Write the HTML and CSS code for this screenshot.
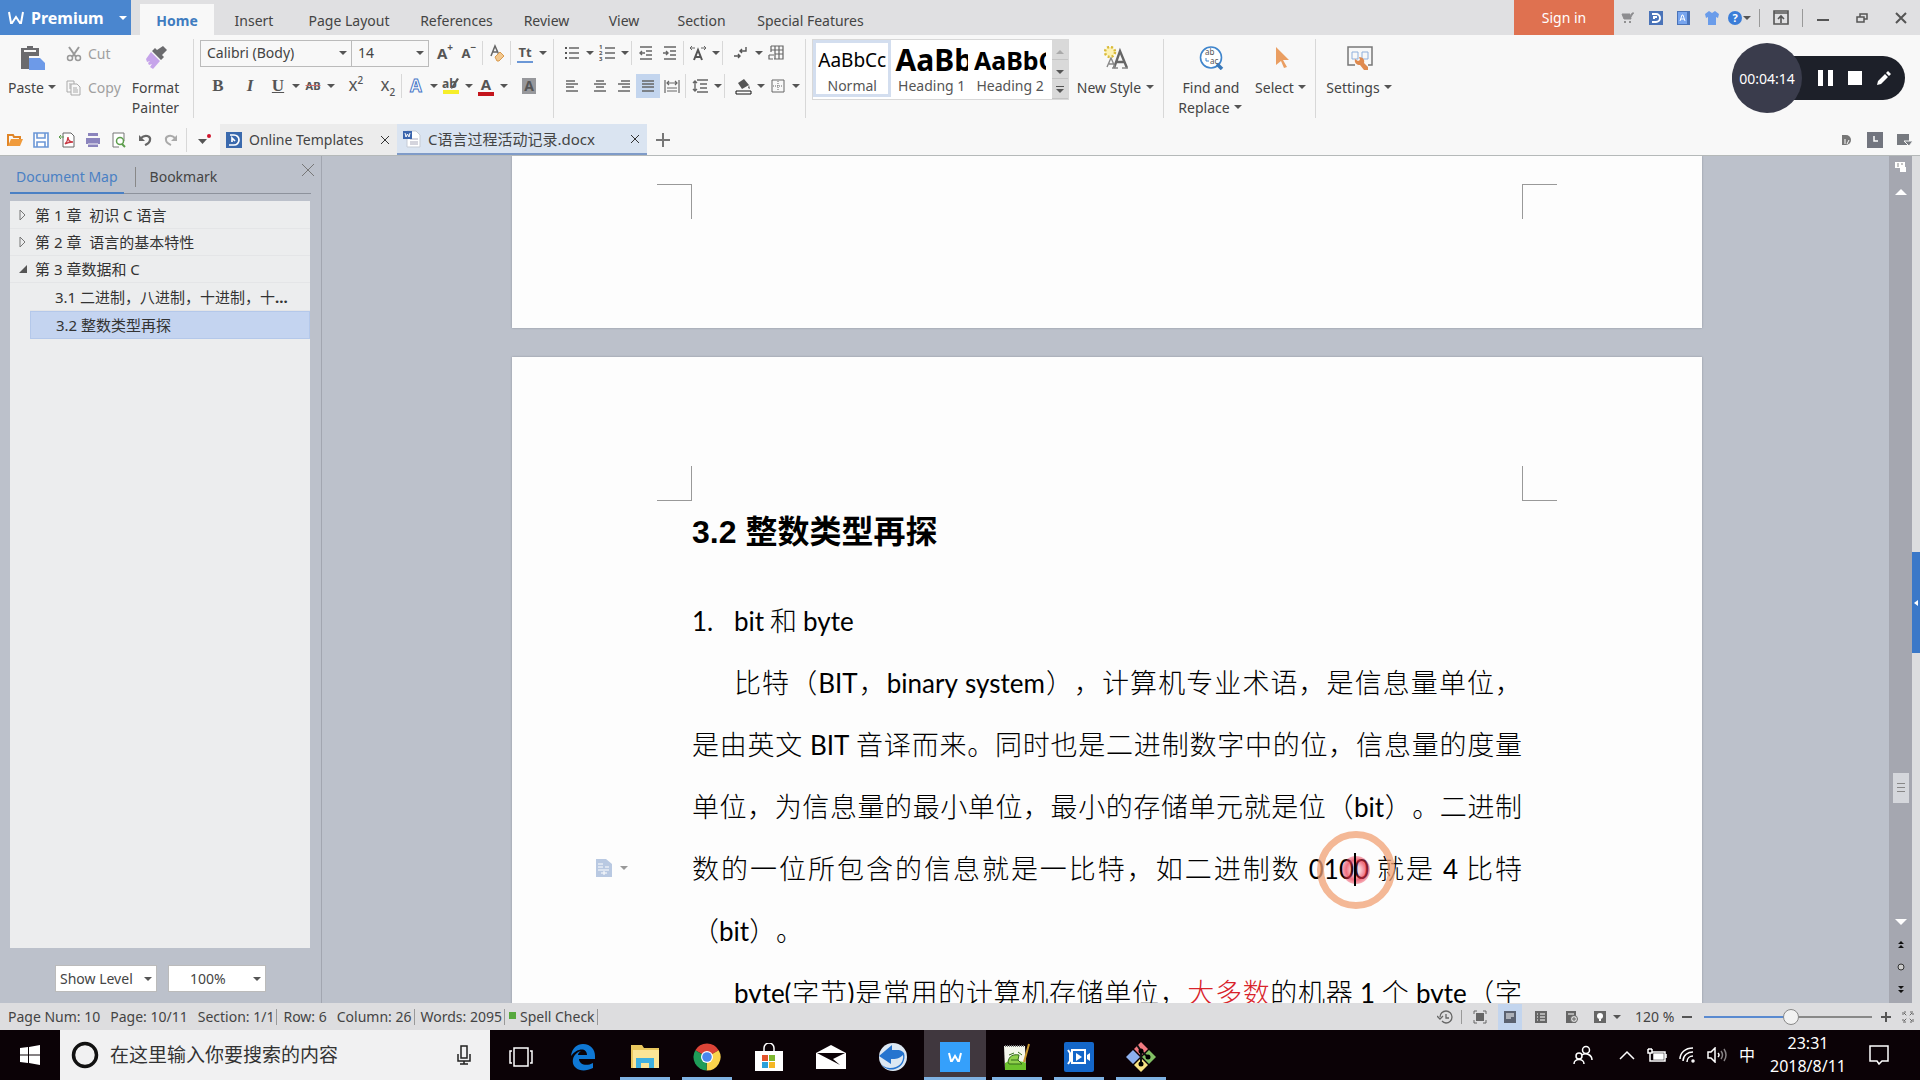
FILE: index.html
```html
<!DOCTYPE html>
<html lang="zh-CN">
<head>
    <meta charset="UTF-8">
    <title>C语言过程活动记录.docx</title>
    <link rel="stylesheet" href="styles.css">
</head>
<body>
<!--标题栏-->
<header class="titlebar">
    <button class="premium">
        <svg width="16" height="14" viewBox="0 0 16 14"><path d="M1 1l2 11h1l4-6 4 6h1l2-11" fill="none" stroke="#fff" stroke-width="2"/></svg>
        <b>Premium</b><i class="caret"></i>
    </button>
    <nav class="menu">
        <a href="#" class="on m-home">Home</a>
        <a href="#" class="m-insert">Insert</a>
        <a href="#" class="m-page">Page Layout</a>
        <a href="#" class="m-ref">References</a>
        <a href="#" class="m-review">Review</a>
        <a href="#" class="m-view">View</a>
        <a href="#" class="m-section">Section</a>
        <a href="#" class="m-special">Special Features</a>
    </nav>
    <button class="signin">Sign in</button>
    <div class="wintools">
        <button title="Shop"><svg width="14" height="14" viewBox="0 0 14 14"><path d="M1 3h8l1 5H3zM9 8l2-6h2" fill="#8d8d90" stroke="#8d8d90"/><circle cx="4" cy="11" r="1" fill="#777"/><circle cx="9" cy="11" r="1" fill="#777"/></svg></button>
        <button title="Docer"><svg width="14" height="14" viewBox="0 0 14 14"><path d="M0 0h14v14H0z" fill="#4a73b8"/><path d="M3 3h4a4 4 0 010 8H3M5 8V6h3" fill="none" stroke="#fff" stroke-width="2"/></svg></button>
        <button title="Library"><svg width="14" height="14" viewBox="0 0 14 14"><path d="M0 0h13v14H0z" fill="#4a73b8"/><path d="M1 1h9v12H1z" fill="#78a5ee"/><path d="M3 10l2-6h1l2 6M4 8h3" fill="none" stroke="#fff"/></svg></button>
        <button title="Skin"><svg width="14" height="14" viewBox="0 0 14 14"><path d="M4 0l3 2 3-2 4 3-1 4-2-1v8H3V6L1 7 0 3z" fill="#6a9cea"/></svg></button>
        <button title="Help" class="help"><svg width="14" height="14" viewBox="0 0 14 14"><circle cx="7" cy="7" r="7" fill="#3b7dd8"/><text x="7" y="11" text-anchor="middle" class="q">?</text></svg><i class="caret"></i></button>
        <i class="vline"></i>
        <button title="Ribbon" class="wide"><svg width="16" height="15" viewBox="0 0 16 15"><path d="M1 1h14v13H1zM1 3h14M8 13V6M5 9l3-3 3 3" fill="none" stroke="#555" stroke-width="1.6"/></svg></button>
        <i class="vline"></i>
        <button title="Minimize" class="win"><svg width="12" height="12" viewBox="0 0 12 12"><path d="M0 8h12" stroke="#555" stroke-width="2"/></svg></button>
        <button title="Restore" class="win"><svg width="12" height="12" viewBox="0 0 12 12"><path d="M1 5h7v5H1zM4 5V2h7v5H8" fill="none" stroke="#555" stroke-width="1.5"/></svg></button>
        <button title="Close" class="win"><svg width="12" height="12" viewBox="0 0 12 12"><path d="M1 1l10 10M11 1L1 11" stroke="#555" stroke-width="2"/></svg></button>
    </div>
</header>

<!--功能区-->
<section class="ribbon">
    <button class="big paste">
        <svg width="24" height="24" viewBox="0 0 24 24"><path d="M0 2h6V0h6v2h6v8H8v13H0z" fill="#6b6b6e"/><path d="M3 5h12" stroke="#f8f8f8" stroke-width="2"/><path d="M8 12h11l5 5v7H8z" fill="#6d9ae8"/></svg>
        <span>Paste<i class="caret"></i></span>
    </button>
    <div class="clip">
        <button><svg width="16" height="16" viewBox="0 0 16 16"><path d="M3 1l7 10M13 1L6 11" stroke="#999" stroke-width="2"/><circle cx="4" cy="12" r="2.5" fill="none" stroke="#999" stroke-width="1.5"/><circle cx="12" cy="12" r="2.5" fill="none" stroke="#999" stroke-width="1.5"/></svg>Cut</button>
        <button><svg width="16" height="16" viewBox="0 0 16 16"><path d="M5 12H1V1h7v3M5 4h6l3 3v8H5zM7 8h4M7 10h5M7 12h5M3 4h2M3 6h2M3 8h2" fill="none" stroke="#aaa"/></svg>Copy</button>
    </div>
    <button class="big painter">
        <svg width="24" height="24" viewBox="0 0 24 24"><path d="M19 0l4 4-5 5 2 2-3 3-9-9 3-3 2 2z" fill="#6b6b6e"/><path d="M7 6l9 9-7 8-3-2 2-3-3 1-1-2 2-2-3 1-1-3z" fill="#c6a4ea"/></svg>
        <span>Format<br>Painter</span>
    </button>
    <i class="sep"></i>

    <div class="group g-font">
        <div class="row">
            <label class="combo font"><select aria-label="Font"><option>Calibri (Body)</option></select><i class="caret"></i></label>
            <label class="combo size"><select aria-label="Font size"><option>14</option></select><i class="caret"></i></label>
            <button class="t gap">A<sup>+</sup></button>
            <button class="t small">A<sup>−</sup></button>
            <i class="bar"></i>
            <button class="t"><svg width="16" height="18" viewBox="0 0 16 18"><path d="M2 12L6 2l4 9M3 8h5" fill="none" stroke="#666" stroke-width="1.5"/><path d="M6 13l5-5 4 4-5 5H8z" fill="#f3c88e" stroke="#d89a4e"/></svg></button>
            <i class="bar"></i>
            <button class="t tt">Tt</button><i class="caret"></i>
        </div>
        <div class="row row2">
            <button class="t serif">B</button>
            <button class="t serif it gap2">I</button>
            <button class="t serif un gap">U</button><i class="caret"></i>
            <button class="t strike">AB</button><i class="caret"></i>
            <button class="t script gap2">X<sup>2</sup></button>
            <button class="t script gap2">X<sub>2</sub></button>
            <i class="bar"></i>
            <button class="t glow">A</button><i class="caret"></i>
            <button class="t"><svg width="18" height="18" viewBox="0 0 18 18"><path d="M1 13h16v4H1z" fill="#f6ee2a"/><text x="0" y="11" class="ab">ab</text><path d="M17 2l-6 9-2 1 1-3 5-8z" fill="#555"/></svg></button><i class="caret"></i>
            <button class="t redbar">A</button><i class="caret"></i>
            <button class="t gap2"><span class="shade">A</span></button>
        </div>
    </div>
    <i class="sep"></i>

    <div class="group g-para">
        <div class="row">
            <button class="t"><svg width="16" height="16" viewBox="0 0 16 16"><path d="M5 3h10M5 8h10M5 13h10" stroke="#666" stroke-width="1.4"/><path d="M1 3h2M1 8h2M1 13h2" stroke="#555" stroke-width="2"/></svg></button><i class="caret"></i>
            <button class="t"><svg width="16" height="18" viewBox="0 0 16 18"><path d="M6 4h10M6 9h10M6 14h10" stroke="#666" stroke-width="1.4"/><text x="0" y="5" class="n">1</text><text x="0" y="11" class="n">2</text><text x="0" y="17" class="n">3</text></svg></button><i class="caret"></i>
            <i class="bar"></i>
            <button class="t"><svg width="14" height="16" viewBox="0 0 14 16"><path d="M1 2h12M7 6h6M7 10h6M1 14h12M1 8h5M3 6L1 8l2 2" fill="none" stroke="#666" stroke-width="1.4"/></svg></button>
            <button class="t"><svg width="14" height="16" viewBox="0 0 14 16"><path d="M1 2h12M7 6h6M7 10h6M1 14h12M0 8h5M3 6l2 2-2 2" fill="none" stroke="#666" stroke-width="1.4"/></svg></button>
            <i class="bar"></i>
            <button class="t"><svg width="16" height="16" viewBox="0 0 16 16"><path d="M4 15l4-10 4 10M5 12h6" fill="none" stroke="#555" stroke-width="2"/><path d="M0 3h5M2 1L0 3l2 2M16 3h-5M14 1l2 2-2 2" fill="none" stroke="#666"/></svg></button><i class="caret"></i>
            <i class="bar"></i>
            <button class="t gap"><svg width="14" height="16" viewBox="0 0 14 16"><path d="M12 2v4H6M8 4L6 6l2 2M0 11h6M4 9l2 2-2 2" fill="none" stroke="#555" stroke-width="1.4"/></svg></button><i class="caret"></i>
            <button class="t"><svg width="16" height="16" viewBox="0 0 16 16"><path d="M3 1h12v13H6M3 1v6M3 5h12M7 1v13M11 1v13M7 9h8M1 10h5M1 10v4h4" fill="none" stroke="#666" stroke-width="1.2"/></svg></button>
        </div>
        <div class="row row2">
            <button class="t"><svg width="14" height="14" viewBox="0 0 14 14"><path d="M1 2h9M1 5h12M1 8h8M1 12h12" stroke="#666" stroke-width="1.4"/></svg></button>
            <button class="t gap"><svg width="14" height="14" viewBox="0 0 14 14"><path d="M3 2h8M1 5h12M3 8h8M1 12h12" stroke="#666" stroke-width="1.4"/></svg></button>
            <button class="t"><svg width="14" height="14" viewBox="0 0 14 14"><path d="M4 2h9M1 5h12M5 8h8M1 12h12" stroke="#666" stroke-width="1.4"/></svg></button>
            <button class="t picked"><svg width="14" height="14" viewBox="0 0 14 14"><path d="M1 2h12M1 5h12M1 8h12M1 12h12" stroke="#666" stroke-width="1.4"/></svg></button>
            <button class="t"><svg width="16" height="14" viewBox="0 0 16 14"><path d="M1 1v13M15 1v13M3 4h10M5 2L3 4l2 2M11 2l2 2-2 2M3 9h10M3 12h10" fill="none" stroke="#666" stroke-width="1.2"/></svg></button>
            <i class="bar"></i>
            <button class="t"><svg width="16" height="16" viewBox="0 0 16 16"><path d="M5 2h11M8 6h7M8 10h7M5 14h11M3 3v10M1 5l2-2 2 2M1 11l2 2 2-2" fill="none" stroke="#666" stroke-width="1.4"/></svg></button><i class="caret"></i>
            <i class="bar"></i>
            <button class="t gap"><svg width="18" height="18" viewBox="0 0 18 18"><path d="M4 6l6-4 5 6-7 4zM15 8l1 4-2-1z" fill="#555"/><path d="M2 14h15v3H2z" fill="#fff" stroke="#111"/></svg></button><i class="caret"></i>
            <button class="t"><svg width="14" height="14" viewBox="0 0 14 14"><path d="M1 1h12v12H1z" fill="none" stroke="#666"/><path d="M7 2v10M2 7h10" stroke="#666" stroke-dasharray="1 1"/></svg></button><i class="caret"></i>
        </div>
    </div>
    <i class="sep"></i>

    <div class="gallery">
        <button class="style chosen"><span class="s0">AaBbCc</span><small>Normal</small></button>
        <button class="style"><b class="s1">AaBb</b><small>Heading 1</small></button>
        <button class="style"><b class="s2">AaBbC</b><small>Heading 2</small></button>
        <div class="scroller">
            <button title="Up"><i class="caret up"></i></button>
            <button title="Down"><i class="caret"></i></button>
            <button title="More"><i class="caret more"></i></button>
        </div>
    </div>
    <button class="big newstyle">
        <svg width="24" height="24" viewBox="0 0 24 24"><path d="M10 22l6-17 7 17M12 16h8" fill="none" stroke="#666" stroke-width="2.4"/><path d="M3 21l4-9 4 9M5 18h5M8 22h6M18 22h6" fill="none" stroke="#888" stroke-width="1.4"/><circle cx="6" cy="6" r="5" fill="#fdf2b5" stroke="#d9bb3a" stroke-width="2.5" stroke-dasharray="2 2"/></svg>
        <span>New Style<i class="caret"></i></span>
    </button>
    <i class="sep"></i>
    <button class="big find">
        <svg width="26" height="24" viewBox="0 0 26 24"><circle cx="13" cy="11.500" r="10.500" fill="#fff" stroke="#3f85cc" stroke-width="1.6"/><path d="M19 18l5 5" stroke="#3a78b8" stroke-width="3.500"/><text x="7" y="9" class="fr">ab</text><text x="12" y="18" class="fr">ac</text><path d="M8 12v3h3" fill="none" stroke="#3f85cc"/></svg>
        <span>Find and<br>Replace<i class="caret"></i></span>
    </button>
    <button class="big select">
        <svg width="16" height="24" viewBox="0 0 16 24"><path d="M2 1l13 13H9l4 7-3 1-3-7-5 4z" fill="#ea9e62"/></svg>
        <span>Select<i class="caret"></i></span>
    </button>
    <i class="sep"></i>
    <button class="big settings">
        <svg width="26" height="24" viewBox="0 0 26 24"><path d="M8 19H1V1h24v18h-4" fill="none" stroke="#777" stroke-width="1.500"/><path d="M5 6h6v7H5zM15 6h6v7h-6z" fill="none" stroke="#8fb0dd"/><path d="M8 13l3 2 2-1-1-3c4 0 6 3 5 6l4 4v3h-4l-4-5c-3 0-6-2-5-6z" fill="#e08a4e"/></svg>
        <span>Settings<i class="caret"></i></span>
    </button>
</section>

<!--快速工具与文档标签-->
<section class="docbar">
    <div class="quick">
        <button title="Open"><svg width="16" height="16" viewBox="0 0 16 16"><path d="M1 14V3h5l1 2h6v2" fill="none" stroke="#e08527" stroke-width="2"/><path d="M4 7h12l-3 7H1z" fill="#f09b3c"/></svg></button>
        <button title="Save"><svg width="16" height="16" viewBox="0 0 16 16"><path d="M1 1h14v14H1zM4 1v5h8V1M4 15v-5h8v5" fill="#fff" stroke="#6b97d6" stroke-width="1.600"/></svg></button>
        <button title="PDF"><svg width="16" height="16" viewBox="0 0 16 16"><path d="M4 1h8l3 3v11H4z" fill="#fff" stroke="#666"/><path d="M6 12c3-3 3-5 3-7 0 3 2 5 5 5-3 0-5 0-8 2" fill="none" stroke="#c93a45" stroke-width="1.300"/><path d="M0 5h5M2 3L0 5l2 2" stroke="#5d9e4c" fill="none"/></svg></button>
        <button title="Print"><svg width="16" height="16" viewBox="0 0 16 16"><path d="M3 1h10v3H3zM1 6h14v6H1zM3 12h10v3H3z" fill="#8b84bd"/><path d="M3 5h10M3 12h10" stroke="#f8f8f8"/></svg></button>
        <button title="Preview"><svg width="16" height="16" viewBox="0 0 16 16"><path d="M13 9V1H2v14h6" fill="#fff" stroke="#777"/><circle cx="9" cy="9" r="3.500" fill="#fff" stroke="#5d9e4c" stroke-width="1.500"/><path d="M11 12l3 3" stroke="#5d9e4c" stroke-width="2"/></svg></button>
        <button title="Undo"><svg width="16" height="16" viewBox="0 0 16 16"><path d="M4 6c4-4 10-2 9 2 0 3-3 4-5 5" fill="none" stroke="#666" stroke-width="2.200"/><path d="M2 3v6h6z" fill="#666"/></svg></button>
        <button title="Redo"><svg width="16" height="16" viewBox="0 0 16 16"><path d="M12 6C8 2 2 4 3 8c0 3 3 4 5 5" fill="none" stroke="#aaa" stroke-width="2"/><path d="M14 3v6H8z" fill="#aaa"/></svg></button>
    </div>
    <i class="bar"></i>
    <button class="marker" title="Customize"><svg width="14" height="14" viewBox="0 0 14 14"><path d="M0 6h9L4.500 11z" fill="#555"/><circle cx="11" cy="3" r="2" fill="#d0142c"/></svg></button>
    <div class="doctab tpl">
        <svg width="16" height="16" viewBox="0 0 16 16"><path d="M0 0h16v16H0z" fill="#3a69ad"/><path d="M4 3h4a5 5 0 010 10H3M6 10V6l3 3" fill="none" stroke="#fff" stroke-width="1.700"/></svg>
        <span>Online Templates</span><button class="x" title="Close"><svg width="10" height="10" viewBox="0 0 10 10"><path d="M1 1l8 8M9 1L1 9" stroke="#333"/></svg></button>
    </div>
    <div class="doctab cur">
        <svg width="18" height="18" viewBox="0 0 18 18"><path d="M4 1h9l4 4v12H4z" fill="#fff" stroke="#c5cbd5"/><path d="M7 9h8M7 12h8M7 14h8" stroke="#aab"/><path d="M0 1h9v8H0z" fill="#3c66ad"/><path d="M2 3l1 4 1.500-3L6 7l1-4" fill="none" stroke="#fff"/></svg>
        <span>C语言过程活动记录.docx</span><button class="x" title="Close"><svg width="10" height="10" viewBox="0 0 10 10"><path d="M1 1l8 8M9 1L1 9" stroke="#333"/></svg></button>
    </div>
    <button class="plus" title="New"><svg width="14" height="14" viewBox="0 0 14 14"><path d="M7 0v14M0 7h14" stroke="#777" stroke-width="2"/></svg></button>
    <div class="side-icons">
        <svg width="12" height="12" viewBox="0 0 12 12"><path d="M1 1h4a5 5 0 010 10H1z" fill="#777"/><path d="M4 10V5M6 10l2-4" stroke="#fff"/></svg>
        <svg width="16" height="16" viewBox="0 0 16 16"><path d="M0 0h16v16H0z" fill="#72757f"/><path d="M7 4v5h4" fill="none" stroke="#fff" stroke-width="1.500"/></svg>
        <svg width="16" height="14" viewBox="0 0 16 14"><path d="M0 1h12v11H0z" fill="#777a80"/><path d="M7 8h9l-4 5z" fill="#777a80" stroke="#f8f8f8"/></svg>
    </div>
</section>

<!--主体-->
<main class="work">
    <aside class="panel">
        <div class="tabs">
            <a href="#" class="on">Document Map</a><i></i><a href="#">Bookmark</a>
            <button title="Close panel"><svg width="12" height="12" viewBox="0 0 12 12"><path d="M0 0l12 12M12 0L0 12" stroke="#777"/></svg></button>
        </div>
        <ul class="tree">
            <li><svg width="8" height="12" viewBox="0 0 8 12"><path d="M1 1l5 5-5 5z" fill="none" stroke="#777"/></svg>第 1 章&nbsp; 初识 C 语言</li>
            <li><svg width="8" height="12" viewBox="0 0 8 12"><path d="M1 1l5 5-5 5z" fill="none" stroke="#777"/></svg>第 2 章&nbsp; 语言的基本特性</li>
            <li><svg width="8" height="12" viewBox="0 0 8 12"><path d="M8 2v8H0z" fill="#555"/></svg>第 3 章数据和 C</li>
            <li class="sub">3.1 二进制，八进制，十进制，十<b>...</b></li>
            <li class="sub picked">3.2 整数类型再探</li>
        </ul>
        <div class="levels">
            <label class="combo"><select aria-label="Show level"><option>Show Level</option></select><i class="caret"></i></label>
            <label class="combo pct"><select aria-label="Map zoom"><option>100%</option></select><i class="caret"></i></label>
        </div>
    </aside>
    <div class="canvas">
        <article class="page first">
            <div class="marks bottom"><i></i><i></i></div>
        </article>
        <article class="page">
            <div class="marks top"><i></i><i></i></div>
            <div class="text">
                <h2>3.2 整数类型再探</h2>
                <p><span class="en no">1.</span><span class="en">bit</span> 和 <span class="en">byte</span></p>
                <p class="full indent">比特（<span class="en">BIT</span>，<span class="en">binary system</span>），计算机专业术语，是信息量单位，</p>
                <p class="full">是由英文 <span class="en">BIT</span> 音译而来。同时也是二进制数字中的位，信息量的度量</p>
                <p class="full">单位，为信息量的最小单位，最小的存储单元就是位（<span class="en">bit</span>）。二进制</p>
                <p class="full">数的一位所包含的信息就是一比特，如二进制数 <span class="en">010<span class="click"><i class="ring"></i><i class="dot"></i><i class="cursor"></i></span>0</span> 就是 <span class="en">4</span> 比特
                    <button class="pastemark" title="Paragraph"><svg width="16" height="18" viewBox="0 0 16 18"><path d="M0 0h10l6 5v13H0z" fill="#b9c9e2"/><path d="M2 5h5M2 8h5M2 11h11M9 8h4M5 14h6M8 12v4" stroke="#fff"/></svg><i class="caret"></i></button></p>
                <p>（<span class="en">bit</span>）。</p>
                <p class="full indent"><span class="en">byte(</span>字节<span class="en">)</span>是常用的计算机存储单位，<em>大多数</em>的机器 <span class="en">1</span> 个 <span class="en">byte</span>（字</p>
            </div>
        </article>
    </div>
    <div class="vscroll">
        <svg width="12" height="12" viewBox="0 0 12 12"><path d="M0 0h10v6H0zM5 5h6v5H5z" fill="#fff"/><path d="M2 2h2M6 2h2M2 4h2" stroke="#888"/></svg>
        <i class="tri up"></i>
        <div class="track"><button class="thumb" title="Scroll"></button></div>
        <i class="tri"></i>
        <svg width="8" height="8" viewBox="0 0 8 8"><path d="M1 4l3-3 3 3zM1 8l3-3 3 3z" fill="#111"/></svg>
        <svg width="8" height="8" viewBox="0 0 8 8"><circle cx="4" cy="4" r="3" fill="#ccc" stroke="#333"/></svg>
        <svg width="8" height="8" viewBox="0 0 8 8"><path d="M1 0l3 3 3-3zM1 4l3 3 3-3z" fill="#111"/></svg>
    </div>
    <div class="edge"><button title="Task pane"><svg width="4" height="6" viewBox="0 0 4 6"><path d="M4 0v6L0 3z" fill="#fff"/></svg></button></div>
</main>

<!--状态栏-->
<footer class="status">
    <span>Page Num: 10</span><span>Page: 10/11</span><span class="end">Section: 1/1</span>
    <span>Row: 6</span><span class="end">Column: 26</span><span class="end">Words: 2095</span>
    <span class="end spell">Spell Check</span>
    <div class="views">
        <button title="History"><svg width="16" height="14" viewBox="0 0 16 14"><path d="M3 7a6 6 0 116 6 6 6 0 01-4-2M0 6l3 3 3-3M9 4v4h3" fill="none" stroke="#666" stroke-width="1.300"/></svg></button>
        <i class="bar"></i>
        <button title="Fit"><svg width="14" height="14" viewBox="0 0 14 14"><path d="M3 3h8v8H3z" fill="#666"/><path d="M1 4V1h3M10 1h3v3M13 10v3h-3M4 13H1v-3" fill="none" stroke="#666"/></svg></button>
        <button title="Print view" class="on"><svg width="12" height="12" viewBox="0 0 12 12"><path d="M0 0h12v12H0z" fill="#5b6270"/><path d="M2 3h8M2 5h8M2 7h5" stroke="#fff"/></svg></button>
        <button title="Outline"><svg width="12" height="12" viewBox="0 0 12 12"><path d="M0 0h12v12H0z" fill="#666"/><path d="M2 3h1M5 3h5M2 6h1M5 6h5M2 9h1M5 9h5" stroke="#fff"/></svg></button>
        <button title="Web"><svg width="12" height="12" viewBox="0 0 12 12"><path d="M0 0h10v12H0z" fill="#666"/><path d="M2 3h6" stroke="#fff"/><circle cx="8" cy="8" r="3.500" fill="#ddd" stroke="#666"/><path d="M6 8h4M8 6v4" stroke="#666"/></svg></button>
        <button title="Eye care" class="eye"><svg width="12" height="12" viewBox="0 0 12 12"><path d="M0 0h12v12H0z" fill="#666"/><circle cx="6" cy="5" r="3" fill="#fff"/><path d="M5 8h2v2H5z" fill="#fff"/></svg><i class="caret"></i></button>
        <label for="zoom">120 %</label>
        <button title="Zoom out" class="z"><svg width="10" height="10" viewBox="0 0 10 10"><path d="M0 5h10" stroke="#555" stroke-width="2"/></svg></button>
        <input type="range" id="zoom" min="0" max="100" value="52">
        <button title="Zoom in" class="z"><svg width="10" height="10" viewBox="0 0 10 10"><path d="M0 5h10M5 0v10" stroke="#555" stroke-width="2"/></svg></button>
        <button title="Full screen" class="fs"><svg width="12" height="12" viewBox="0 0 12 12"><path d="M1 4V1h3M8 1h3v3M11 8v3H8M4 11H1V8M2 2l3 3M10 2L7 5M2 10l3-3M10 10L7 7" fill="none" stroke="#666" stroke-dasharray="3 1"/></svg></button>
    </div>
</footer>

<!--任务栏-->
<div class="taskbar">
    <button class="start" title="Start"><svg width="20" height="20" viewBox="0 0 20 20"><path d="M0 3l8-1v7.500H0zM9 2l11-2v9.500H9zM0 10.500h8V18l-8-1zM9 10.500h11V20L9 18z" fill="#fff"/></svg></button>
    <div class="search">
        <svg width="28" height="28" viewBox="0 0 28 28"><circle cx="14" cy="14" r="11.500" fill="none" stroke="#111" stroke-width="3.500"/></svg>
        <input type="text" placeholder="在这里输入你要搜索的内容" aria-label="搜索">
        <svg width="14" height="20" viewBox="0 0 14 20"><path d="M4 1h6v12H4zM1 9v7h12V9M7 16v3M3 19h8" fill="none" stroke="#222" stroke-width="1.500"/></svg>
    </div>
    <div class="apps">
        <button title="Task view"><svg width="24" height="20" viewBox="0 0 24 20"><path d="M5 1h14v18H5zM3 4H1v12h2M21 4h2v12h-2" fill="none" stroke="#fff" stroke-width="1.500"/></svg></button>
        <button title="Edge"><svg width="26" height="28" viewBox="0 0 26 28"><path d="M1 13C2 5 7 1 13 1c8 0 12 6 12 12v3H9c0 5 7 8 14 4v5C11 31 1 25 3 16c1-4 4-7 8-8-2 1-3 3-3 4h9c0-7-9-8-16 1z" fill="#0f78d4"/></svg></button>
        <button title="Explorer" class="run"><svg width="30" height="26" viewBox="0 0 30 26"><path d="M1 1h11l2 3h15v20H1z" fill="#e9c75e"/><path d="M3 6h26v18H3z" fill="#fbe597"/><path d="M6 24V14h18v10h-5v-5h-8v5z" fill="#3fb0e0"/></svg></button>
        <button title="Chrome" class="run"><svg width="28" height="28" viewBox="0 0 28 28"><path d="M14 14L2.300 7.200A13.500 13.500 0 0125.700 7.300z" fill="#dc4437"/><path d="M14 14L25.700 7.200A13.500 13.500 0 0113.500 27.500z" fill="#fbd44c"/><path d="M14 14L13.500 27.500A13.500 13.500 0 012.300 7.200z" fill="#1f9d58"/><circle cx="14" cy="14" r="6" fill="#fff"/><circle cx="14" cy="14" r="4.800" fill="#4a87ee"/></svg></button>
        <button title="Store"><svg width="28" height="28" viewBox="0 0 28 28"><path d="M0 8h28v20H0z" fill="#fff"/><path d="M9 9V5a5 5 0 0110 0v4" fill="none" stroke="#fff" stroke-width="1.500"/><path d="M7 12h6v6H7z" fill="#e2532c"/><path d="M14 12h6v6h-6z" fill="#7db72f"/><path d="M7 19h6v6H7z" fill="#2ba0da"/><path d="M14 19h6v6h-6z" fill="#f5b624"/></svg></button>
        <button title="Mail"><svg width="30" height="24" viewBox="0 0 30 24"><path d="M0 8l15-8 15 8v16H0z" fill="#fff"/><path d="M1 8h28l-12 6 7 6z" fill="#0b0206"/></svg></button>
        <button title="Sync"><svg width="30" height="30" viewBox="0 0 30 30"><circle cx="15" cy="15" r="14" fill="#dce8f3"/><path d="M14 3L1 14l12 8v-5c5 0 8 0 12-4 1 7-4 13-13 13-5 0-9-3-10-7 2 7 9 10 15 8 7-2 11-9 9-16-3-4-7-3-12-3z" fill="#2574cf"/></svg></button>
        <button title="WPS" class="run active"><svg width="30" height="30" viewBox="0 0 30 30"><path d="M0 0h30v30H0z" fill="#35a0fb"/><path d="M9 11l2 8h1l3-5 3 5h1l2-8" fill="none" stroke="#fff" stroke-width="2"/></svg></button>
        <button title="Notepad++" class="run"><svg width="28" height="28" viewBox="0 0 28 28"><path d="M1 3h21l1 24H2z" fill="#f4f7ec"/><path d="M2 20c5-3 14-3 21 0v7H2z" fill="#6cc22d"/><path d="M5 19c1-6 5-8 11-7l-1 5 4 4H6zM6 12l5-2M15 9l4 3M8 17h7" fill="#8fd04c" stroke="#356b1c"/><path d="M2 3h20" stroke="#777" stroke-width="2" stroke-dasharray="1 1"/><path d="M26 1l-5 18" stroke="#c9982e" stroke-width="2"/></svg></button>
        <button title="Recorder" class="run"><svg width="30" height="30" viewBox="0 0 30 30"><rect width="30" height="30" rx="2" fill="#1467c9"/><path d="M4 8l2 3v8l-2 3M8 8h13v13H8z" fill="none" stroke="#fff" stroke-width="2"/><path d="M12 11l6 4-6 4zM23 13l3-2v8l-3-2z" fill="#fff"/></svg></button>
        <button title="Git" class="run"><svg width="30" height="30" viewBox="0 0 30 30"><path d="M15 0l7 7-7 7-7-7z" fill="#f07a80"/><path d="M7 8l7 7-7 7-7-7z" fill="#8db0ee"/><path d="M23 8l7 7-7 7-7-7z" fill="#82c064"/><path d="M15 16l7 7-7 7-7-7z" fill="#f8e382"/><path d="M11 3l4 6v13M15 9l7 6" fill="none" stroke="#111" stroke-width="2"/><circle cx="15" cy="9" r="2.500"/><circle cx="22" cy="15" r="2.500"/><circle cx="15" cy="22" r="2.500"/></svg></button>
    </div>
    <div class="tray">
        <svg class="people" width="20" height="20" viewBox="0 0 20 20"><circle cx="13" cy="5" r="3.500"/><circle cx="6" cy="11" r="3"/><path d="M1 19c0-6 10-6 10 0M9 10c4-3 10 0 10 5"/></svg>
        <svg width="16" height="10" viewBox="0 0 16 10"><path d="M1 9l7-7 7 7"/></svg>
        <svg width="20" height="14" viewBox="0 0 20 14"><path d="M5 4h13v9H3V9"/><path d="M7 6h9v5H7z" fill="#fff"/><path d="M19 6v4M1 1v4h4V1M3 5v4M2 0v2M4 0v2"/></svg>
        <svg width="16" height="16" viewBox="0 0 16 16"><path d="M1 12C1 6 6 1 14 1M4 14c0-6 5-9 10-9M8 15c0-4 3-6 6-6"/><circle cx="14" cy="14" r="1"/></svg>
        <svg width="20" height="16" viewBox="0 0 20 16"><path d="M1 5h3l4-4v14l-4-4H1zM11 6q2 2 0 4"/><path d="M14 4q3 4 0 8M17 2q4 6 0 12" opacity=".5"/></svg>
        <span class="ime">中</span>
        <div class="clock">23:31<br>2018/8/11</div>
        <svg width="20" height="20" viewBox="0 0 20 20"><path d="M1 1h18v15h-6l-3 3-2-3H1z"/></svg>
    </div>
</div>

<!--录屏悬浮条-->
<div class="recorder">
    <div class="time">00:04:14</div>
    <button title="Pause"><svg width="16" height="16" viewBox="0 0 16 16"><path d="M1 0h5v16H1zM11 0h5v16h-5z" fill="#fff"/></svg></button>
    <button title="Stop"><svg width="14" height="14" viewBox="0 0 14 14"><path d="M0 0h14v14H0z" fill="#fff"/></svg></button>
    <button title="Pen"><svg width="14" height="14" viewBox="0 0 14 14"><path d="M0 14l1-4 7-7 3 3-7 7zM9 2l2-2 3 3-2 2z" fill="#fff"/></svg></button>
</div>
</body>
</html>
```
FILE: styles.css
```css
* {
    box-sizing: border-box;
}

body {
    display: flex;
    flex-direction: column;
    height: 100vh;
    margin: 0;
    overflow: hidden;
    background: #f8f8f8;
    color: #444;
    font-family: "Noto Sans", "Noto Sans CJK SC", sans-serif;
    font-size: 14px;
    line-height: 20px;
}

button, select, input {
    margin: 0;
    padding: 0;
    border: 0;
    background: none;
    color: inherit;
    font: inherit;
}

a {
    color: inherit;
    text-decoration: none;
}

svg {
    display: block;
    flex: none;
}

h2, p, ul {
    margin: 0;
    padding: 0;
}

.caret {
    display: inline-block;
    flex: none;
    width: 11px;
    height: 4px;
}

.caret::before {
    content: "";
    display: block;
    width: 0;
    margin: 0 auto;
    border: 4px solid transparent;
    border-top-color: #555;
    border-bottom: 0;
}

.caret.up::before {
    border-top: 0;
    border-bottom: 4px solid #aaa;
}

/* 标题栏 */
.titlebar {
    display: flex;
    flex: none;
    height: 35px;
    background: #e0e0e2;
}

.premium {
    display: flex;
    align-items: center;
    width: 131px;
    padding-left: 8px;
    background: #4a86cf;
    color: #fff;
    font-size: 16px;
}

.premium b {
    width: 78px;
    margin-left: 7px;
    text-align: left;
}

.premium .caret {
    margin-left: 8px;
}

.premium .caret::before {
    border-top-color: #fff;
}

.menu {
    display: flex;
    flex: 1;
    margin-left: 9px;
    white-space: nowrap;
}

.menu a {
    height: 31px;
    margin-top: 4px;
    line-height: 33px;
    text-align: center;
}

.menu .on {
    background: #f8f8f8;
    color: #3f7cc0;
    font-weight: bold;
}

.m-home {
    width: 74px;
}

.m-insert, .m-view {
    width: 80px;
}

.m-page {
    width: 110px;
}

.m-ref {
    width: 105px;
}

.m-review, .m-section {
    width: 75px;
}

.m-special {
    width: 143px;
}

.signin {
    width: 100px;
    background: #df7150;
    color: #fff;
    line-height: 35px;
}

.wintools {
    display: flex;
    align-items: center;
    width: 306px;
}

.wintools button {
    display: flex;
    align-items: center;
    justify-content: center;
    width: 28px;
}

.wintools .help {
    margin-right: 5px;
}

.wintools .wide {
    width: 42px;
}

.wintools .win {
    flex: 1;
}

.q {
    fill: #fff;
    font-size: 11px;
    font-weight: bold;
}

.vline {
    width: 1px;
    height: 18px;
    background: #999;
}

/* 功能区 */
.ribbon {
    display: flex;
    flex: none;
    height: 89px;
    padding-top: 4px;
    white-space: nowrap;
}

.sep {
    width: 1px;
    height: 79px;
    background: #d8d8d8;
}

.bar {
    flex: none;
    width: 1px;
    height: 24px;
    margin: 0 2px 0 1px;
    background: #d8d8d8;
}

.big {
    display: flex;
    flex-direction: column;
    align-items: center;
    padding-top: 7px;
}

.big span {
    margin-top: 8px;
}

.big .caret {
    margin: 0 0 4px 3px;
}

.paste {
    width: 66px;
}

.clip {
    width: 57px;
}

.clip button {
    display: flex;
    align-items: center;
    gap: 6px;
    height: 38px;
    color: #a0a0a0;
}

.clip button:first-child {
    height: 30px;
}

.painter {
    width: 65px;
    margin-right: 5px;
}

.row {
    display: flex;
    align-items: center;
    height: 28px;
}

.row2 {
    height: 38px;
}

.g-font {
    width: 359px;
    padding-left: 6px;
}

.g-font .row2 {
    padding-left: 6px;
}

.g-para {
    width: 251px;
    padding-left: 6px;
}

.combo {
    display: flex;
    align-items: center;
    height: 27px;
    border: 1px solid #bbb;
    background: #fff;
}

.combo select {
    flex: 1;
    width: 0;
    padding-left: 6px;
    appearance: none;
}

.combo .caret {
    margin-right: 3px;
}

.ribbon .combo {
    background: #f8f8f8;
}

.font {
    width: 152px;
}

.size {
    width: 77px;
    border-left: 0;
}

.t {
    display: flex;
    flex: none;
    align-items: center;
    justify-content: center;
    width: 24px;
    height: 24px;
    color: #555;
    font-size: 15px;
    font-weight: bold;
}

.t sup, .t sub {
    font-size: 10px;
    line-height: 12px;
}

.t sup {
    align-self: flex-start;
}

.t sub {
    align-self: flex-end;
}

.t.small {
    font-size: 13px;
}

.t.script {
    font-size: 14px;
    font-weight: 500;
}

.gap {
    margin-left: 4px;
}

.gap2 {
    margin-left: 8px;
}

.t.serif {
    font-family: "Liberation Serif", serif;
    font-size: 17px;
}

.it {
    font-style: italic;
}

.un {
    text-decoration: underline;
}

.t.tt {
    width: 16px;
    height: 20px;
    margin: 0 4px;
    border-bottom: 2px solid #6b97d6;
    font-size: 13px;
}

.t.strike {
    font-size: 11px;
    text-decoration: line-through #c96a6a;
}

.t.glow {
    color: #fff;
    font-size: 17px;
    -webkit-text-stroke: 1px #4a78c8;
}

.ab {
    fill: #555;
    font-size: 12px;
    font-weight: bold;
}

.t.redbar {
    width: 16px;
    height: 19px;
    margin: 0 4px;
    border-bottom: 4px solid #c4151c;
    line-height: 15px;
}

.shade {
    width: 14px;
    background: #97989c;
    line-height: 16px;
    font-size: 14px;
    text-align: center;
}

.n {
    fill: #555;
    font-size: 6px;
    font-weight: bold;
}

.t.picked {
    background: #c3d5ee;
}

.gallery {
    display: flex;
    width: 257px;
    height: 61px;
    margin-left: 6px;
    border: 1px solid #d8d8d8;
    background: #fff;
}

.style {
    display: flex;
    flex-direction: column;
    align-items: flex-start;
    width: 74px;
    margin-right: 6px;
    overflow: hidden;
    color: #000;
}

.style.chosen {
    align-items: center;
    width: 80px;
    height: 57px;
    margin-right: 4px;
    border: 3px solid #d3deef;
}

.style.chosen span {
    margin-top: -3px;
}

.style span, .style b {
    height: 36px;
    line-height: 40px;
}

.style small {
    align-self: center;
    color: #555;
    font-size: 14px;
}

.s0 {
    font-size: 19px;
}

.s1 {
    font-size: 30px;
}

.s2 {
    font-size: 25px;
}

.scroller {
    display: flex;
    flex-direction: column;
    width: 16px;
    margin-left: auto;
    background: #d9d9d9;
}

.scroller button {
    flex: 1;
    border-bottom: 1px solid #c4c4c4;
    line-height: 8px;
}

.scroller .more {
    border-top: 1px solid #555;
    width: 8px;
    height: 7px;
    padding-top: 2px;
}

.newstyle {
    width: 94px;
}

.find {
    width: 82px;
    margin-left: 6px;
}

.select {
    width: 63px;
    padding-right: 4px;
}

.settings {
    width: 88px;
}

.fr {
    fill: #555;
    font-size: 8px;
}

/* 文档标签 */
.docbar {
    display: flex;
    flex: none;
    align-items: center;
    height: 32px;
    border-bottom: 1px solid #b5b9b9;
}

.docbar svg {
    margin: 0 auto;
}

.quick {
    display: flex;
    width: 185px;
    padding-left: 2px;
}

.quick button {
    width: 26px;
}

.marker {
    width: 31px;
}

.doctab {
    display: flex;
    align-items: center;
    height: 31px;
    padding: 0 6px;
    background: #ececec;
    white-space: nowrap;
}

.doctab span {
    flex: 1;
    margin-left: 7px;
}

.doctab svg {
    margin: 0;
}

.x {
    width: 11px;
}

.tpl {
    width: 177px;
}

.cur {
    width: 250px;
    border-bottom: 2px solid #7f9bc8;
    background: #dae4f1;
    font-size: 15px;
}

.plus {
    width: 32px;
}

.side-icons {
    display: flex;
    gap: 14px;
    align-items: center;
    margin-left: auto;
    padding-right: 7px;
}

/* 主体 */
.work {
    display: flex;
    flex: 1;
    min-height: 0;
    background: #bcc1cb;
}

.panel {
    display: flex;
    flex: none;
    flex-direction: column;
    width: 322px;
    padding: 0 10px;
    border-right: 1px solid #a2a6b0;
}

.tabs {
    display: flex;
    align-items: center;
    height: 38px;
    border-bottom: 1px solid #8d929c;
}

.tabs a {
    height: 38px;
    padding: 0 6px;
    line-height: 41px;
}

.tabs .on {
    border-bottom: 2px solid #4a80c4;
    color: #4a80c4;
}

.tabs i {
    width: 1px;
    height: 20px;
    margin: 4px 8px 0 11px;
    background: #888;
}

.tabs button {
    align-self: flex-start;
    margin: 8px -3px 0 auto;
}

.tree {
    flex: 1;
    margin: 7px 1px 0 0;
    padding-top: 1px;
    background: #ecedee;
    color: #333;
    font-size: 15px;
    list-style: none;
}

.tree li {
    display: flex;
    align-items: center;
    height: 27px;
    padding-left: 9px;
    border-bottom: 1px solid #e4e5e7;
    white-space: nowrap;
}

.tree svg {
    margin-right: 8px;
}

.tree .sub {
    height: 28px;
    margin-left: 20px;
    padding-left: 25px;
}

.tree .picked {
    border: 1px solid #b4c8ea;
    background: #c4d4f0;
}

.levels {
    display: flex;
    gap: 11px;
    padding: 17px 0 11px 45px;
}

.levels .combo {
    width: 102px;
}

.levels select {
    padding-left: 4px;
}

.levels .pct {
    width: 98px;
}

.pct select {
    padding-left: 21px;
}

.canvas {
    display: flex;
    flex: 1;
    flex-direction: column;
    align-items: center;
    min-width: 0;
    padding-left: 3px;
    overflow: hidden;
}

.page {
    flex: none;
    width: 1190px;
    height: 1684px;
    background: #fdfdfd;
    box-shadow: 0 0 2px #8f949e;
}

.page.first {
    height: 172px;
    margin-bottom: 29px;
}

.marks {
    display: flex;
    justify-content: space-between;
    margin: 0 145px;
}

.marks i {
    width: 35px;
    height: 35px;
    border: 0 solid #999;
    border-right-width: 1px;
}

.marks i + i {
    border-right-width: 0;
    border-left-width: 1px;
}

.marks.bottom {
    padding-top: 28px;
}

.bottom i {
    border-top-width: 1px;
}

.marks.top {
    padding-top: 109px;
}

.top i {
    border-bottom-width: 1px;
}

.text {
    padding: 0 180px;
    color: #000;
    font-family: "Noto Sans CJK SC", sans-serif;
    font-size: 27px;
    font-weight: 300;
    line-height: 62px;
    white-space: nowrap;
    text-spacing-trim: space-all;
}

.text h2 {
    margin-bottom: 26px;
    font-family: "Liberation Sans", "Noto Sans CJK SC", sans-serif;
    font-size: 32px;
    font-weight: bold;
}

.text p {
    position: relative;
    height: 62px;
}

.text .full {
    text-align: justify;
    text-align-last: justify;
}

.text .indent {
    padding-left: 42px;
}

.en {
    font-family: Lato, sans-serif;
    font-size: 26px;
    font-weight: 400;
}

.no {
    display: inline-block;
    width: 42px;
}

.text em {
    color: #d8232b;
    font-style: normal;
}

/* 点击效果 */
.click {
    position: relative;
}

.click i {
    position: absolute;
}

.ring {
    top: -22px;
    left: -37px;
    width: 78px;
    height: 78px;
    border: 7px solid rgba(240, 160, 115, .75);
    border-radius: 50%;
}

.dot {
    top: 3px;
    left: -12px;
    width: 28px;
    height: 28px;
    border-radius: 50%;
    background: radial-gradient(rgba(235, 50, 75, .2) 20%, rgba(235, 50, 75, .7) 50%, rgba(235, 50, 75, .4) 70%);
}

.cursor {
    top: 0;
    left: 0;
    width: 2px;
    height: 33px;
    background: #000;
}

.pastemark {
    position: absolute;
    top: 22px;
    left: -96px;
    display: flex;
    gap: 6px;
    align-items: center;
}

.pastemark .caret::before {
    border-top-color: #999;
}

.vscroll {
    display: flex;
    flex: none;
    flex-direction: column;
    gap: 15px;
    align-items: center;
    width: 23px;
    padding: 6px 0 9px;
    background: #a5a7b0;
}

.tri {
    border: 6px solid transparent;
    border-top-color: #fff;
    border-bottom: 0;
}

.tri.up {
    border-top: 0;
    border-bottom: 6px solid #fff;
}

.track {
    display: flex;
    flex: 1;
    flex-direction: column;
    justify-content: flex-end;
    padding-bottom: 101px;
}

.thumb {
    width: 16px;
    height: 30px;
    border: 10px solid #d5d7dc;
    border-width: 10px 4px 11px;
    background: repeating-linear-gradient(#888 0 1px, #d5d7dc 1px 4px);
}

.edge {
    flex: none;
    width: 8px;
    padding-top: 396px;
    background: #dcdddf;
}

.edge button {
    width: 8px;
    height: 101px;
    padding-left: 2px;
    background: #3a78c8;
}

/* 状态栏 */
.status {
    display: flex;
    flex: none;
    align-items: center;
    height: 27px;
    padding-left: 8px;
    background: #dddddf;
    white-space: nowrap;
}

.status span {
    margin-right: 10px;
}

.status .end {
    margin-right: 6px;
    padding-right: 2px;
    border-right: 1px solid #999;
    line-height: 16px;
}

.status .spell {
    margin-left: -2px;
}

.spell::before {
    content: "";
    display: inline-block;
    width: 7px;
    height: 7px;
    margin-right: 4px;
    background: #57a83e;
    vertical-align: 3px;
}

.views {
    display: flex;
    align-items: center;
    margin-left: auto;
    padding-right: 6px;
}

.views button {
    display: flex;
    align-items: center;
    justify-content: center;
    width: 31px;
    height: 26px;
}

.views .bar {
    height: 14px;
    background: #999;
}

.views .on {
    width: 24px;
    margin: 0 3px;
    background: #c3d5ee;
}

.views .eye {
    width: 42px;
    gap: 6px;
}

.views label {
    width: 46px;
    margin-left: 6px;
}

.views .z {
    width: 11px;
}

.views .fs {
    width: 12px;
    margin-left: 11px;
}

.views input {
    width: 168px;
    height: 16px;
    margin: 0 8px 0 12px;
    appearance: none;
    background: linear-gradient(to right, #5a8ad0 52%, #888 52%) center / 100% 2px no-repeat;
}

.views input::-webkit-slider-thumb {
    width: 16px;
    height: 16px;
    border: 1px solid #888;
    border-radius: 50%;
    appearance: none;
    background: #f2f2f2;
}

/* 任务栏 */
.taskbar {
    display: flex;
    flex: none;
    height: 50px;
    background: #0b0206;
    color: #fff;
}

.taskbar svg {
    margin: 0 auto;
}

.start {
    width: 60px;
}

.search {
    display: flex;
    align-items: center;
    width: 430px;
    padding: 0 19px 0 11px;
    background: #f1f1f2;
}

.search input {
    flex: 1;
    padding-left: 11px;
    font-size: 19px;
}

.search input::placeholder {
    color: #333;
}

.apps {
    display: flex;
}

.apps button {
    width: 62px;
    border: 6px solid transparent;
    border-width: 3px 6px 0;
}

.apps .run {
    background: linear-gradient(#7fb2e2, #7fb2e2) bottom / 100% 3px no-repeat;
}

.apps .active {
    border-width: 3px 0 0;
    background: linear-gradient(#7fb2e2, #7fb2e2) bottom / 100% 3px no-repeat, #40373e;
}

.tray {
    display: flex;
    gap: 12px;
    align-items: center;
    margin-left: auto;
    padding-right: 31px;
    font-size: 16px;
    line-height: 23px;
}

.tray svg {
    fill: none;
    stroke: #fff;
    stroke-width: 1.5;
}

.tray .people {
    margin-right: 14px;
}

.clock {
    width: 82px;
    text-align: center;
}

.tray .clock + svg {
    margin-left: 8px;
}

/* 录屏悬浮条 */
.recorder {
    position: absolute;
    top: 56px;
    right: 15px;
    display: flex;
    gap: 15px;
    align-items: center;
    height: 44px;
    padding-right: 14px;
    border-radius: 22px;
    background: #1d2029;
}

.time {
    width: 70px;
    height: 70px;
    border-radius: 50%;
    background: #3a3c4c;
    color: #fff;
    line-height: 72px;
    text-align: center;
}
```
